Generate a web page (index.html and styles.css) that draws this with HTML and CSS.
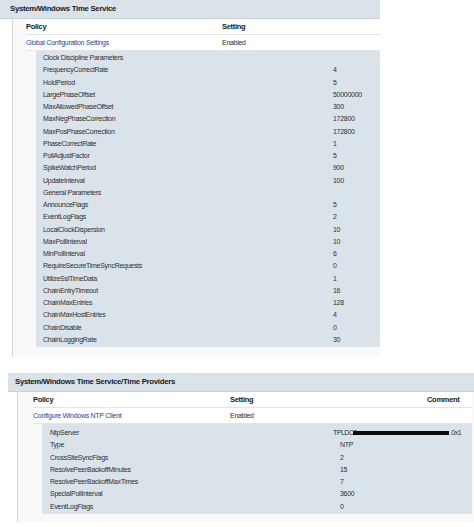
FILE: index.html
```html
<!DOCTYPE html>
<html>
<head>
<meta charset="utf-8">
<link rel="stylesheet" href="styles.css">
</head>
<body>
<section class="sec sec1">
  <div class="sec-head">System/Windows Time Service</div>
  <div class="sec-body">
    <div class="prow head"><span>Policy</span><span>Setting</span></div>
    <div class="prow"><span class="link">Global Configuration Settings</span><span>Enabled</span></div>
    <div class="box">
      <div class="r"><span>Clock Discipline Parameters</span><span></span></div>
      <div class="r"><span>FrequencyCorrectRate</span><span>4</span></div>
      <div class="r"><span>HoldPeriod</span><span>5</span></div>
      <div class="r"><span>LargePhaseOffset</span><span>50000000</span></div>
      <div class="r"><span>MaxAllowedPhaseOffset</span><span>300</span></div>
      <div class="r"><span>MaxNegPhaseCorrection</span><span>172800</span></div>
      <div class="r"><span>MaxPosPhaseCorrection</span><span>172800</span></div>
      <div class="r"><span>PhaseCorrectRate</span><span>1</span></div>
      <div class="r"><span>PollAdjustFactor</span><span>5</span></div>
      <div class="r"><span>SpikeWatchPeriod</span><span>900</span></div>
      <div class="r"><span>UpdateInterval</span><span>100</span></div>
      <div class="r"><span>General Parameters</span><span></span></div>
      <div class="r"><span>AnnounceFlags</span><span>5</span></div>
      <div class="r"><span>EventLogFlags</span><span>2</span></div>
      <div class="r"><span>LocalClockDispersion</span><span>10</span></div>
      <div class="r"><span>MaxPollInterval</span><span>10</span></div>
      <div class="r"><span>MinPollInterval</span><span>6</span></div>
      <div class="r"><span>RequireSecureTimeSyncRequests</span><span>0</span></div>
      <div class="r"><span>UtilizeSslTimeData</span><span>1</span></div>
      <div class="r"><span>ChainEntryTimeout</span><span>16</span></div>
      <div class="r"><span>ChainMaxEntries</span><span>128</span></div>
      <div class="r"><span>ChainMaxHostEntries</span><span>4</span></div>
      <div class="r"><span>ChainDisable</span><span>0</span></div>
      <div class="r"><span>ChainLoggingRate</span><span>30</span></div>
    </div>
  </div>
</section>

<section class="sec sec2">
  <div class="sec-head">System/Windows Time Service/Time Providers</div>
  <div class="sec-body">
    <div class="prow head three"><span>Policy</span><span>Setting</span><span>Comment</span></div>
    <div class="prow three"><span class="link">Configure Windows NTP Client</span><span>Enabled</span><span></span></div>
    <div class="box">
      <div class="r"><span>NtpServer</span><span class="ntp">TPLDC0<span class="redact"></span>.0x1</span></div>
      <div class="r"><span>Type</span><span>NTP</span></div>
      <div class="r"><span>CrossSiteSyncFlags</span><span>2</span></div>
      <div class="r"><span>ResolvePeerBackoffMinutes</span><span>15</span></div>
      <div class="r"><span>ResolvePeerBackoffMaxTimes</span><span>7</span></div>
      <div class="r"><span>SpecialPollInterval</span><span>3600</span></div>
      <div class="r"><span>EventLogFlags</span><span>0</span></div>
    </div>
  </div>
</section>
</body>
</html>
```

FILE: styles.css
```css
html, body {
  margin: 0;
  padding: 0;
  background: #ffffff;
}
body {
  font-family: "Liberation Sans", Arial, sans-serif;
  font-size: 7px;
  letter-spacing: -0.28px;
  color: #2e2e2e;
}
.sec-head {
  height: 18px;
  line-height: 18px;
  background: #dbe3ea;
  border-bottom: 1px solid #c8d0d8;
  font-weight: bold;
  font-size: 7.8px;
  letter-spacing: -0.3px;
  color: #1a1a1a;
}
.sec-body {
  border-left: 1px solid #d4d4d4;
  background: #f9f9f9;
}

/* section 1 */
.sec1 {
  width: 380px;
}
.sec1 .sec-head {
  padding-left: 10px;
}
.sec1 .sec-body {
  margin-left: 12px;
  padding-left: 13px;
  padding-bottom: 10px;
}
.sec1 .prow {
  grid-template-columns: 196px 1fr;
}
.sec1 .box {
  margin-left: 10px;
  padding: 1px 0 1px 7px;
}

/* section 2 */
.sec2 {
  margin-top: 16px;
  margin-left: 8px;
}
.sec2 .sec-head {
  padding-left: 7px;
}
.sec2 .sec-body {
  margin-left: 9px;
  padding-left: 15px;
  padding-right: 2px;
  padding-bottom: 8px;
}
.sec2 .prow.three {
  grid-template-columns: 197px 197px 1fr;
}
.sec2 .box {
  margin-left: 9px;
  padding: 3px 0 1px 8px;
}

/* policy rows */
.prow {
  display: grid;
  height: 15px;
  line-height: 15px;
  background: #ffffff;
  border-bottom: 1px solid #e4e4e4;
}
.prow.head {
  font-weight: bold;
  font-size: 7.5px;
  letter-spacing: -0.3px;
  color: #1a1a1a;
}
.link {
  color: #2f3f9c;
}

/* nested box */
.box {
  background: #dbe3ea;
}
.r {
  display: grid;
  grid-template-columns: 290px 1fr;
  height: 12.26px;
  line-height: 12.26px;
  white-space: nowrap;
}
.ntp {
  margin-left: -7px;
  letter-spacing: -0.5px;
}
.redact {
  display: inline-block;
  width: 96px;
  height: 4px;
  background: #0a0a0a;
  vertical-align: middle;
  margin-left: -4px;
  margin-right: 1px;
}
```
